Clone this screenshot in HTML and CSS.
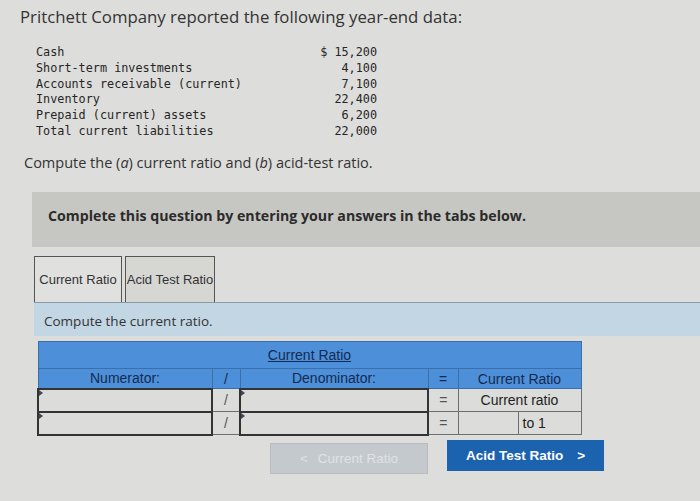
FILE: index.html
```html
<!DOCTYPE html>
<html>
<head>
<meta charset="utf-8">
<link rel="stylesheet" href="styles.css">
</head>
<body>
<div class="page">
  <p class="title">Pritchett Company reported the following year-end data:</p>
  <div class="data">
    <span>Cash</span><span class="val">$ 15,200</span>
    <span>Short-term investments</span><span class="val">4,100</span>
    <span>Accounts receivable (current)</span><span class="val">7,100</span>
    <span>Inventory</span><span class="val">22,400</span>
    <span>Prepaid (current) assets</span><span class="val">6,200</span>
    <span>Total current liabilities</span><span class="val">22,000</span>
  </div>
  <p class="compute">Compute the (<i>a</i>) current ratio and (<i>b</i>) acid-test ratio.</p>

  <div class="banner">Complete this question by entering your answers in the tabs below.</div>

  <div class="tabs">
    <div class="tab active">Current Ratio</div>
    <div class="tab">Acid Test Ratio</div>
  </div>
  <div class="panel-head">Compute the current ratio.</div>

  <table class="ratio">
    <tr class="h1">
      <th colspan="6"><span class="u">Current Ratio</span></th>
    </tr>
    <tr class="h2">
      <th class="c-num">Numerator:</th>
      <th class="c-op">/</th>
      <th class="c-den">Denominator:</th>
      <th class="c-op2">=</th>
      <th class="c-res" colspan="2">Current Ratio</th>
    </tr>
    <tr class="r">
      <td class="in"><span class="mark"></span></td>
      <td class="op">/</td>
      <td class="in"><span class="mark"></span></td>
      <td class="op">=</td>
      <td class="res" colspan="2">Current ratio</td>
    </tr>
    <tr class="r">
      <td class="in"><span class="mark"></span></td>
      <td class="op">/</td>
      <td class="in"><span class="mark"></span></td>
      <td class="op">=</td>
      <td class="blank"></td>
      <td class="to">to 1</td>
    </tr>
  </table>

  <div class="nav">
    <div class="btn prev"><span class="chev">&lt;</span> Current Ratio</div>
    <div class="btn next">Acid Test Ratio <span class="chev">&gt;</span></div>
  </div>
</div>
</body>
</html>
```
FILE: styles.css
```css
html, body {
  margin: 0;
  padding: 0;
  background: #dddddb;
}
.page {
  width: 700px;
  height: 501px;
  overflow: hidden;
  font-family: "Open Sans", sans-serif;
  color: #2a2a2a;
  padding-top: 6px;
  box-sizing: border-box;
}
.title {
  margin: 0 0 0 20px;
  font-size: 16.8px;
  line-height: 22px;
  color: #333;
}
.data {
  margin: 17px 0 0 36px;
  width: 341px;
  display: grid;
  grid-template-columns: 1fr auto;
  font-family: "DejaVu Sans Mono", monospace;
  font-size: 11.8px;
  line-height: 15.8px;
  color: #262626;
}
.val { text-align: right; }
.compute {
  margin: 13px 0 0 24px;
  font-size: 14.5px;
  line-height: 20px;
  color: #333;
}
.banner {
  margin: 19px 0 0 32px;
  height: 55px;
  background: #c6c7c2;
  box-sizing: border-box;
  padding: 14px 0 0 16px;
  font-weight: bold;
  font-size: 14.2px;
  color: #2b2b2b;
}
.tabs {
  display: flex;
  margin: 9px 0 0 34px;
  gap: 3px;
  height: 46px;
}
.tab {
  box-sizing: border-box;
  border: 1px solid #555;
  border-bottom: none;
  font-family: "Liberation Sans", sans-serif;
  font-size: 13px;
  color: #333;
  display: flex;
  align-items: center;
  justify-content: center;
  background: #d6d6d3;
}
.tab:nth-child(1) { width: 88px; background: #e0e0de; }
.tab:nth-child(2) { width: 90px; }
.panel-head {
  margin-left: 34px;
  height: 34px;
  background: #c3d6e3;
  box-sizing: border-box;
  padding: 9px 0 0 10px;
  font-size: 13.5px;
  color: #333;
  border-top: 1px solid #8a9aa6;
}
.ratio {
  margin: 5px 0 0 37px;
  border-collapse: collapse;
  font-family: "Liberation Sans", Arial, sans-serif;
  font-size: 14px;
  color: #222;
}
.ratio th {
  background: #4d8fd8;
  color: #132b52;
  font-weight: normal;
  padding: 0;
  border: 1px solid #3b6fa8;
}
.h1 th { height: 26px; }
.h1 .u { text-decoration: underline; }
.h2 th { height: 19px; }
.c-num { width: 173px; }
.c-op { width: 27px; }
.c-den { width: 187px; }
.c-op2 { width: 29px; }
.c-res { width: 122px; }
.ratio td {
  padding: 0;
  border: 1px solid #6f6f6f;
  background: #dcdcda;
  text-align: center;
}
.r td { height: 21px; }
.ratio td.in {
  border: 2px solid #333;
  position: relative;
}
.mark {
  position: absolute;
  left: 0;
  top: 0;
  width: 0;
  height: 0;
  border-left: 4px solid #445;
  border-top: 3px solid transparent;
  border-bottom: 3px solid transparent;
}
.op { color: #555; }
.c-op2 { color: #8fb4e0; }
.blank { width: 59px; }
.to { text-align: left !important; padding-left: 4px !important; }
.nav {
  display: flex;
  margin: 4px 0 0 270px;
  gap: 19px;
  align-items: flex-start;
}
.btn {
  height: 31px;
  box-sizing: border-box;
  display: flex;
  align-items: center;
  justify-content: center;
  font-family: "Liberation Sans", Arial, sans-serif;
  font-size: 13.5px;
}
.prev {
  width: 158px;
  margin-top: 3px;
  background: #c4c9cd;
  color: #dfe3e6;
  border: 1px solid #b8bcbf;
}
.prev .chev { margin-right: 10px; }
.next {
  width: 157px;
  background: #1c63af;
  color: #fff;
  font-weight: bold;
}
.next .chev { margin-left: 14px; }
```
